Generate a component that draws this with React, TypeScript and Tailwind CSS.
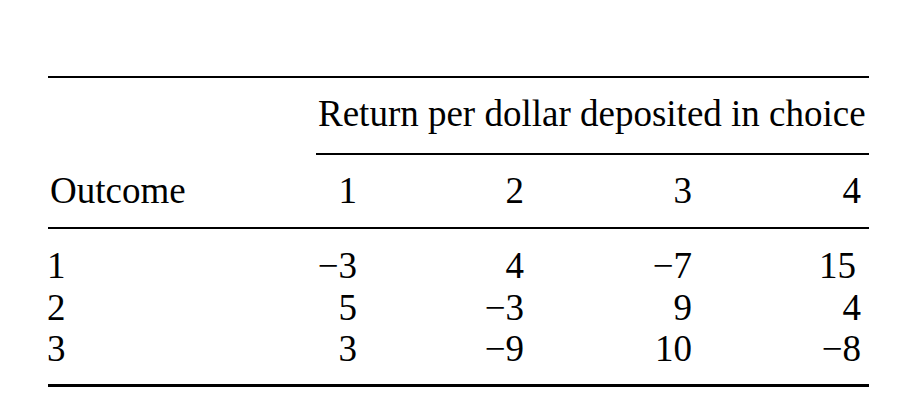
import React from "react";

const cellCls = [
  "w-[41px] text-right",
  "w-[167px] text-right",
  "w-[168px] text-right",
  "w-[177px] pr-[8px] text-right",
];

const rows: { label: string; vals: string[]; extra?: Record<number, string> }[] = [
  { label: "1", vals: ["\u22123", "4", "\u22127", "15"] },
  { label: "2", vals: ["5", "\u22123", "9", "4"] },
  { label: "3", vals: ["3", "\u22129", "10", "\u22128"] },
];

export default function App() {
  return (
    <div
      className="w-[905px] h-[413px] bg-white pt-[76px] pl-[48px] text-black"
      style={{ fontFamily: '"Liberation Serif", "Times New Roman", serif' }}
    >
      <div className="w-[821px] text-[37px]">
        <div className="h-[2px] bg-black" />
        <div className="flex">
          <div className="w-[268px]" />
          <div className="flex-1 pt-[17px] pb-[21px] border-b-2 border-black leading-[37px] pl-[2px] whitespace-nowrap">
            Return per dollar deposited in choice
          </div>
        </div>
        <div className="flex pt-[17px] pb-[18px] leading-[37px] border-b-2 border-black">
          <div className="w-[268px] pl-[2px]">Outcome</div>
          <div className={cellCls[0]}>1</div>
          <div className={cellCls[1]}>2</div>
          <div className={cellCls[2]}>3</div>
          <div className={cellCls[3]}>4</div>
        </div>
        <div className="pt-[16px] pb-[14.5px] leading-[41.5px]">
          {rows.map((r) => (
            <div key={r.label} className="flex">
              <div className="w-[268px] -ml-[1px] mr-[1px]">{r.label}</div>
              {r.vals.map((v, i) => (
                <div key={i} className={cellCls[i]}>
                  {v === "15" ? <span className="pr-[5px]">{v}</span> : v}
                </div>
              ))}
            </div>
          ))}
        </div>
        <div className="h-[3px] bg-black" />
      </div>
    </div>
  );
}
